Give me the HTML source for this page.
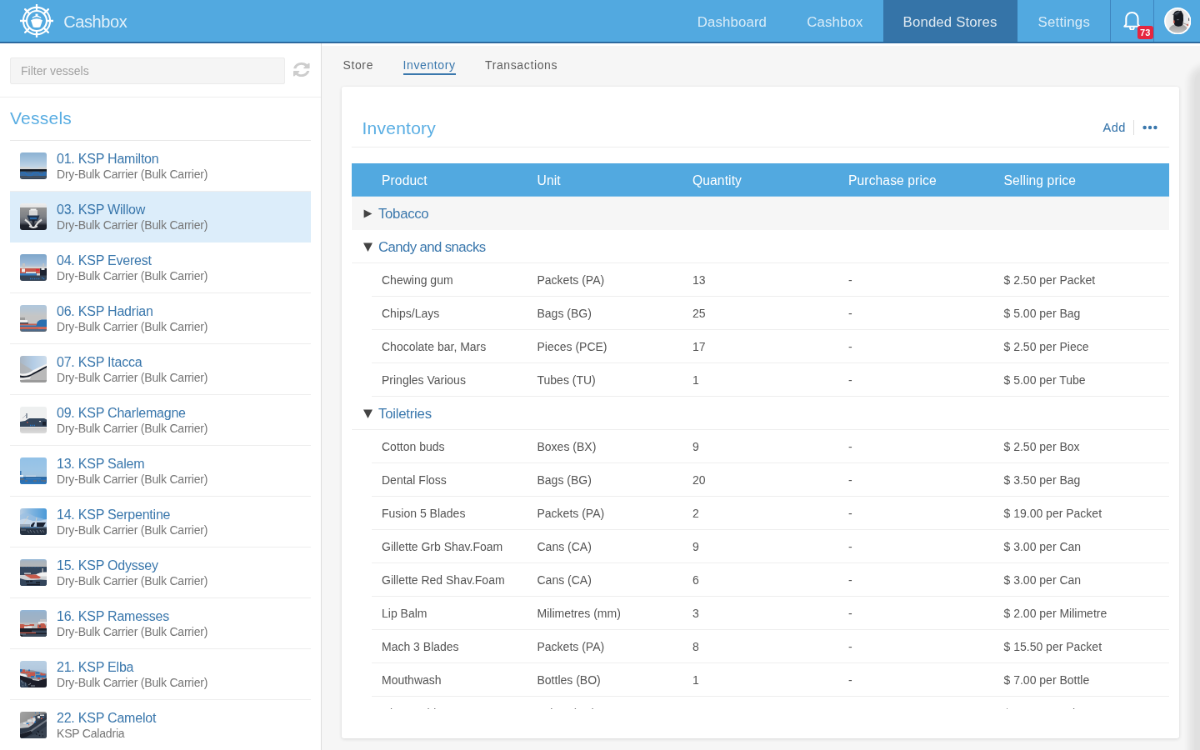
<!DOCTYPE html>
<html lang="en">
<head>
<meta charset="utf-8">
<title>Cashbox - Bonded Stores</title>
<style>
*{box-sizing:border-box;margin:0;padding:0}
html,body{width:1200px;height:750px;overflow:hidden;background:#f6f6f6}
body{font-family:"Liberation Sans",Arial,sans-serif;color:#555;font-size:14px}
a{text-decoration:none;color:inherit}
#app{position:absolute;left:0;top:0;width:1440px;height:900px;transform:scale(.833333);transform-origin:0 0;background:transparent;overflow:hidden;will-change:transform}

/* ---------- top bar ---------- */
#top{position:absolute;left:0;top:0;width:1440px;height:52px;background:#52a9e0;border-bottom:2px solid #2c699f}
#wline{position:absolute;left:386px;top:52px;width:1054px;height:2.7px;background:#fff}
#logo{position:absolute;left:24px;top:5px;width:40px;height:40px}
#brand{position:absolute;left:76.3px;top:13.6px;font-size:20px;line-height:24px;letter-spacing:-.42px;color:rgba(255,255,255,.84)}
#nav{position:absolute;left:812.4px;top:0;height:50px;display:flex}
#nav a{display:block;height:50px;line-height:53.6px;padding:0;text-align:center;font-size:16.8px;letter-spacing:.15px;color:rgba(255,255,255,.78);white-space:nowrap}
#nav a.on{background:#3574a8;color:rgba(255,255,255,.84)}
#bellbox{position:absolute;left:1332.2px;top:0;width:53px;height:50px;border-left:1px solid #3f86c0;border-right:1px solid #3f86c0}
#bell{position:absolute;left:14.1px;top:12.2px;width:22px;height:24px}
#badge{position:absolute;left:31.500px;top:31.200px;width:19px;height:15.600px;background:#e5263f;border-radius:3px;color:#fff;font-size:11px;font-weight:bold;line-height:16px;text-align:center}
#avatar{position:absolute;left:1396.8px;top:8.800px;width:32.400px;height:32.400px}
#avatar svg{display:block}

/* ---------- sidebar ---------- */
#side{position:absolute;left:0;top:52px;width:386px;height:848px;background:#fff;border-right:1px solid #dedede}
#filter{position:absolute;left:12px;top:17px;width:330px;height:32px;background:#f5f5f5;border:1px solid #ececec;border-radius:2px;padding-left:12px;font-size:14px;line-height:31px;color:#a2a2a2}
#refresh{position:absolute;left:352.4px;top:23.2px;width:19.6px;height:17.2px}
#side .hr1{position:absolute;left:0;top:64px;width:385px;height:1px;background:#eee}
#side h2{position:absolute;left:12px;top:76.3px;font-size:21px;line-height:28px;font-weight:normal;color:#5aaee3;letter-spacing:.24px}
#side .hr2{position:absolute;left:12px;top:116.2px;width:361px;height:1px;background:#e8e8e8}
#vessels{position:absolute;left:12px;top:117.4px;width:361px;list-style:none}
#vessels li{position:relative;height:61px;border-bottom:1px solid #eee}
#vessels li.sel{background:#dcedfa;border-bottom-color:#dcedfa}
#vessels .th{position:absolute;left:12px;top:13.3px;width:32px;height:32px;border-radius:3px;overflow:hidden}
#vessels .t{position:absolute;left:56px;top:11.2px;font-size:16px;line-height:20px;color:#3b78ad;white-space:nowrap;letter-spacing:-.22px}
#vessels .s{position:absolute;left:56px;top:30.6px;font-size:14px;line-height:18px;color:#777;white-space:nowrap;letter-spacing:-.2px}

/* ---------- main ---------- */
#tabs{position:absolute;left:411.5px;top:68px;font-size:14px;line-height:20px;color:#5e5e5e;white-space:nowrap}
#tabs a{position:absolute;top:0;letter-spacing:.62px}
#tabs a.on{color:#3b78ad;border-bottom:2px solid #3b78ad;padding-bottom:0}
#card{position:absolute;left:410px;top:104px;width:1005px;height:782px;background:#fff;border-radius:3px;box-shadow:0 1px 4px rgba(0,0,0,.13),0 0 1px rgba(0,0,0,.06);overflow:hidden}
#card h1{position:absolute;left:24.5px;top:35.6px;font-size:21px;line-height:28px;font-weight:normal;color:#5aaee3;letter-spacing:.24px}
#add{position:absolute;left:913.5px;top:39px;font-size:14.5px;line-height:20px;color:#3b78ad;letter-spacing:.5px;-webkit-text-stroke:.1px currentColor}
#vsep{position:absolute;left:950px;top:40px;width:1px;height:18px;background:#ddd}
#dots{position:absolute;left:960px;top:46px;width:20px;height:6px}
#card .hr{position:absolute;left:12px;top:72px;width:981px;height:1px;background:#eee}
#tbl{position:absolute;left:12px;top:92px;width:981px;height:654.9px;overflow:hidden}
.row{position:relative;height:40px;white-space:nowrap}
.row span{position:absolute;top:0;line-height:40px}
.hd{background:#52a9e0;color:#fff;font-size:15.6px;letter-spacing:.12px}
.hd span{line-height:41px}
.grp{font-size:16.8px;color:#3b78ad;border-bottom:1px solid #eee}
.grp.alt{background:#f6f6f6;border-bottom-color:#f6f6f6}
.grp i{position:absolute;left:14px;top:15px;width:11px;height:11px}
.grp i svg{display:block}
.grp span{left:32px;line-height:42.6px}
.it{color:#555;font-size:14px}
.it:after{content:"";position:absolute;left:24px;right:0;bottom:0;height:1px;background:#eee}
.c1{left:36px}.c2{left:222.5px}.c3{left:409px}.c4{left:596px}.c5{left:782.5px}
#sb{position:absolute;left:1433px;top:84px;width:40px;height:900px;border-radius:14px;background:rgba(0,0,0,.085);box-shadow:0 0 9px 6px rgba(0,0,0,.085)}
</style>
</head>
<body>
<div id="app">

<div id="top">
  <svg id="logo" viewBox="0 0 40 40"><g fill="none" stroke="#fff"><circle cx="20" cy="20" r="16.100" stroke-width="2.100"/><circle cx="20" cy="20" r="12" stroke-width="2.200"/><path d="M32.20 20.00L40.00 20.00M28.63 28.63L33.86 33.86M20.00 32.20L20.00 40.00M11.37 28.63L6.14 33.86M7.80 20.00L0.00 20.00M11.37 11.37L6.14 6.14M20.00 7.80L20.00 0.00M28.63 11.37L33.86 6.14" stroke-width="2.300" stroke-linecap="round"/></g><g fill="#fff"><path d="M13 19.300Q20 15.200 27 19.300L24.200 27.600Q20 28.600 15.800 27.600Z"/><path d="M14.800 17.200Q20 13.200 25.200 17.200L25.200 15.800Q20 11.800 14.800 15.800Z"/><path d="M18.500 11.600h3v2.800h-3z"/></g></svg>
  <div id="brand">Cashbox</div>
  <div id="nav">
    <a style="width:132px">Dashboard</a><a style="width:115.2px">Cashbox</a><a class="on" style="width:161px">Bonded Stores</a><a style="width:112.4px;letter-spacing:.25px">Settings</a>
  </div>
  <div id="bellbox">
    <svg id="bell" viewBox="0 0 22 24"><g fill="none" stroke="#fff" stroke-width="2.050" stroke-linejoin="round" stroke-linecap="round"><path d="M2.300 19.750L4.300 17.300V9.900A7.100 7 0 0 1 18.500 9.900V17.300L20.500 19.750Z"/><path d="M9.100 21.300A2.300 2.300 0 0 0 13.700 21.300"/></g></svg>
    <div id="badge">73</div>
  </div>
  <div id="avatar"><svg viewBox="0 0 32 32" width="32.400" height="32.400"><defs><linearGradient id="av" x1="0" y1="0" x2="1" y2="0"><stop offset="0" stop-color="#f2f2f2"/><stop offset=".5" stop-color="#e2e2e2"/><stop offset="1" stop-color="#ececec"/></linearGradient><linearGradient id="av2" x1="0" y1="0" x2="0" y2="1"><stop offset="0" stop-color="#9e9e9e"/><stop offset=".5" stop-color="#b4b4b4"/><stop offset="1" stop-color="#d6d6d6"/></linearGradient><clipPath id="avc"><circle cx="16" cy="16" r="14.200"/></clipPath></defs><circle cx="16" cy="16" r="16" fill="#fff"/><g clip-path="url(#avc)"><rect width="32" height="32" fill="url(#av)"/><ellipse cx="16.700" cy="26.300" rx="10.900" ry="6.800" fill="url(#av2)"/><path d="M11.200 8.500Q11.500 4 16 3.600Q21.500 3.500 22.600 9Q23.200 15 22 20.500Q20 22.600 16.500 22.400Q13 22.400 12 20Q10.600 14 11.200 8.500Z" fill="#171a21"/><path d="M9.500 8.200l4.500-1.500 5-3 2 .8-6 5.200z" fill="#2a303a"/><path d="M13 7.500l5-2.500M15 14.500h2.500" stroke="#7e8792" stroke-width=".8"/><path d="M10.800 15.500l1.400-.5.500 3-1.700.8z" fill="#d8604e"/><path d="M26.200 20l1.800-.8 1 1.800-1.600.9z" fill="#d8604e"/><rect x="24.200" y="10" width="1.500" height="6.500" fill="#dfeaf4"/><rect x="28.800" y="12.500" width="1.100" height="3.200" fill="#3a3f48"/><path d="M22.500 18.500l5 2" stroke="#8c8c8c" stroke-width=".8"/></g></svg></div>
</div>

<div id="wline"></div>

<div id="side">
  <div id="filter">Filter vessels</div>
  <svg id="refresh" viewBox="0 0 1536 1536" preserveAspectRatio="none"><path fill="#cdcdcd" d="M1511 928q0 5-1 7-64 268-268 434.500t-478 166.500q-146 0-282.500-55t-243.500-157l-129 129q-19 19-45 19t-45-19-19-45v-448q0-26 19-45t45-19h448q26 0 45 19t19 45-19 45l-137 137q71 66 161 102t187 36q134 0 250-65t186-179q11-17 53-117 8-23 30-23h192q13 0 22.500 9.500t9.500 22.500zM1536 128v448q0 26-19 45t-45 19h-448q-26 0-45-19t-19-45 19-45l138-138q-148-137-349-137-134 0-250 65t-186 179q-11 17-53 117-8 23-30 23h-199q-13 0-22.500-9.500t-9.500-22.500v-7q65-268 270-434.500t480-166.500q146 0 284 55.500t245 156.500l130-129q19-19 45-19t45 19 19 45z"/></svg>
  <div class="hr1"></div>
  <h2>Vessels</h2>
  <div class="hr2"></div>
  <ul id="vessels">
    <li><div class="th"><svg viewBox="0 0 32 32" width="32" height="32"><defs><linearGradient id="g1" x1="0" y1="0" x2="0" y2="1"><stop offset="0" stop-color="#8cb2d3"/><stop offset="0.3" stop-color="#a6c4de"/><stop offset="0.55" stop-color="#c2d6e7"/><stop offset="0.6" stop-color="#d3d8dc"/></linearGradient></defs><rect width="32" height="32" fill="url(#g1)"/><rect y="20" width="32" height="12" fill="#364658"/><rect y="20" width="32" height="2.2" fill="#151b24"/><rect y="23.5" width="32" height="4.5" fill="#3a6a9e"/><path d="M1 24h5l3 3.5h5l2-3.5h6l2 3h5v-3h2" stroke="#2a70b8" stroke-width="1.6" fill="none"/><rect y="28.5" width="32" height="2" fill="#4a5868"/><rect x="0" y="17" width="12" height="2.5" fill="#d5d5d2" opacity=".8"/><rect x="22" y="17.5" width="10" height="2" fill="#d5d5d2" opacity=".8"/></svg></div><div class="t">01. KSP Hamilton</div><div class="s">Dry-Bulk Carrier (Bulk Carrier)</div></li>
    <li class="sel"><div class="th"><svg viewBox="0 0 32 32" width="32" height="32"><defs><linearGradient id="g2" x1="0" y1="0" x2="0" y2="1"><stop offset="0" stop-color="#eeeeee"/><stop offset="0.15" stop-color="#e4e4e4"/><stop offset="0.17" stop-color="#949494"/><stop offset="0.5" stop-color="#7e8186"/><stop offset="0.72" stop-color="#5a5e68"/><stop offset="0.82" stop-color="#20232d"/><stop offset="1" stop-color="#1c1f29"/></linearGradient></defs><rect width="32" height="32" fill="url(#g2)"/><path d="M11 8h10v7h-10z" fill="#d8d8d8"/><path d="M12.5 6.5h7v2h-7z" fill="#f2f2f2"/><path d="M8.5 14.5h15l-2.5 6.5h-10z" fill="#24364e"/><path d="M12 18h8" stroke="#2a78c4" stroke-width="1.3"/><path d="M6 19.500q5 3 8 8.500M26 19.500q-5 3-8 8.500" stroke="#dcdcdc" stroke-width="2.200" fill="none"/><path d="M11 27.500q5 3 10 0" stroke="#e4e4e4" stroke-width="1.800" fill="none"/><path d="M14 20l2 7 2-7z" fill="#1c2230"/></svg></div><div class="t">03. KSP Willow</div><div class="s">Dry-Bulk Carrier (Bulk Carrier)</div></li>
    <li><div class="th"><svg viewBox="0 0 32 32" width="32" height="32"><defs><linearGradient id="g3" x1="0" y1="0" x2="0" y2="1"><stop offset="0" stop-color="#7da6cb"/><stop offset="0.35" stop-color="#9cbad8"/><stop offset="0.45" stop-color="#b4c4d4"/><stop offset="0.5" stop-color="#d0d0d0"/></linearGradient></defs><rect width="32" height="32" fill="url(#g3)"/><rect y="15" width="32" height="4" fill="#d4d4d4"/><rect x="3" y="11" width="3" height="5" fill="#c4c4c4"/><rect x="27.500" y="11" width="1.500" height="5" fill="#c8c8c8"/><rect y="17" width="24" height="6" fill="#c4594a"/><rect x="2" y="17.500" width="4" height="4" fill="#eee"/><rect x="7" y="21" width="12" height="2.500" fill="#d8d8d8"/><rect x="19" y="18" width="4" height="1.800" fill="#e8243c"/><rect x="24" y="17" width="8" height="9" fill="#1c2230"/><rect x="25.500" y="16.500" width="4" height="2.500" fill="#e6e6e6"/><rect y="23" width="20" height="3" fill="#3a7cbc"/><rect y="25.500" width="32" height="6.500" fill="#364456"/><path d="M12 29.500h12M26 28.500h1.500M28 29.500h2" stroke="#2a78c4" stroke-width="1.300" stroke-dasharray="1.300 1.200"/></svg></div><div class="t">04. KSP Everest</div><div class="s">Dry-Bulk Carrier (Bulk Carrier)</div></li>
    <li><div class="th"><svg viewBox="0 0 32 32" width="32" height="32"><defs><linearGradient id="g4" x1="0" y1="0" x2="0" y2="1"><stop offset="0" stop-color="#b0c8de"/><stop offset="0.25" stop-color="#bcc6d0"/><stop offset="0.4" stop-color="#c6c6c6"/><stop offset="1" stop-color="#c4c4c4"/></linearGradient></defs><rect width="32" height="32" fill="url(#g4)"/><rect y="18" width="9" height="3.500" fill="#f0f0f0"/><rect y="15" width="6" height="3" fill="#8a8a8a" opacity=".7"/><rect y="21" width="10" height="2.500" fill="#3c4656"/><path d="M21 20q2-2.500 5-2.500h6v8h-13z" fill="#2a6fb0"/><rect y="22.500" width="20" height="2" fill="#c46050"/><rect y="24.500" width="32" height="1.800" fill="#2a6fb0"/><rect y="26.200" width="32" height="2.800" fill="#c86252"/><rect x="22" y="27.500" width="10" height="1.800" fill="#d86a5c"/><rect y="29" width="32" height="3" fill="#5a6878"/><path d="M3 30h26" stroke="#2a70b8" stroke-width="1.200" stroke-dasharray="1.500 1.200"/></svg></div><div class="t">06. KSP Hadrian</div><div class="s">Dry-Bulk Carrier (Bulk Carrier)</div></li>
    <li><div class="th"><svg viewBox="0 0 32 32" width="32" height="32"><defs><linearGradient id="g5" x1="0" y1="0" x2="1" y2="0"><stop offset="0" stop-color="#a9b6c4"/><stop offset=".5" stop-color="#b4cde6"/><stop offset="1" stop-color="#cfdeec"/></linearGradient></defs><rect width="32" height="32" fill="url(#g5)"/><path d="M0 8l10 6 6 4-16 6z" fill="#b2b2b2" opacity=".75"/><path d="M0 22.500q8 2 16-3.500l16-8.500v21.500h-32z" fill="#b9b9b9"/><path d="M0 21q8 2 16-4l16-7.500v2.500l-16 8q-8 5-16 3.500z" fill="#f4f4f4"/><path d="M0 23.500q8 2.500 16-3l16-8.500v2l-16 8.500q-8 5-16 3z" fill="#141a26"/><path d="M0 27q8 0 13-2l-1 2.500-12 1.500z" fill="#f4f4f4"/><rect y="29" width="32" height="3" fill="#9a9a9a"/></svg></div><div class="t">07. KSP Itacca</div><div class="s">Dry-Bulk Carrier (Bulk Carrier)</div></li>
    <li><div class="th"><svg viewBox="0 0 32 32" width="32" height="32"><defs><linearGradient id="g6" x1="0" y1="0" x2="0" y2="1"><stop offset="0" stop-color="#eef0f0"/><stop offset="0.45" stop-color="#f0f0f0"/><stop offset="0.75" stop-color="#dedede"/><stop offset="0.8" stop-color="#cacaca"/><stop offset="1" stop-color="#dcdcdc"/></linearGradient></defs><rect width="32" height="32" fill="url(#g6)"/><path d="M0 18l6-1 5-3h18l3 1.500v8.500h-32z" fill="#34465c"/><rect x="7" y="8" width="2" height="6" fill="#8e98a4"/><path d="M3 14l4-4" stroke="#a8aeb6" stroke-width=".8"/><rect x="8" y="18" width="1.500" height="1.500" fill="#d65a48"/><rect x="23" y="17" width="2" height="1.200" fill="#e8e8e8"/><path d="M12 22.500h6" stroke="#2a78c4" stroke-width="1.300" stroke-dasharray="1.300 1.100"/><rect x="27" y="18" width="4" height="4.500" fill="#1a2230"/><rect y="24" width="32" height="1" fill="#e8e8e8"/></svg></div><div class="t">09. KSP Charlemagne</div><div class="s">Dry-Bulk Carrier (Bulk Carrier)</div></li>
    <li><div class="th"><svg viewBox="0 0 32 32" width="32" height="32"><defs><linearGradient id="g7" x1="0" y1="0" x2="0" y2="1"><stop offset="0" stop-color="#93c2e8"/><stop offset="0.5" stop-color="#9ec6e6"/><stop offset="0.7" stop-color="#a4c4de"/></linearGradient></defs><rect width="32" height="32" fill="url(#g7)"/><rect y="16" width="1.500" height="6" fill="#3e7ab4"/><rect y="21" width="4" height="3.500" fill="#eef2f6"/><rect x="7" y="21.500" width="12" height="2" fill="#c6d6e6"/><rect y="23.500" width="32" height="8.500" fill="#2b70b3"/><rect x="4" y="23.500" width="28" height="1.400" fill="#1f5a96"/><path d="M0 26h5M6 28h3M16 28h4M22 28h1M25 27.500h1.200M27 28h4" stroke="#6a6f78" stroke-width="1.600"/><path d="M7 25.500h18" stroke="#4c8ac6" stroke-width=".8"/><rect y="30" width="32" height="2" fill="#2f78bc"/></svg></div><div class="t">13. KSP Salem</div><div class="s">Dry-Bulk Carrier (Bulk Carrier)</div></li>
    <li><div class="th"><svg viewBox="0 0 32 32" width="32" height="32"><defs><linearGradient id="g8" x1="0" y1="0" x2="1" y2="0"><stop offset="0" stop-color="#b9cfe4"/><stop offset=".45" stop-color="#7fb4e0"/><stop offset="1" stop-color="#4b9ad8"/></linearGradient></defs><rect width="32" height="32" fill="url(#g8)"/><path d="M0 8q6-4 12-1t10 4 10 3v6h-32z" fill="#9cc0e2" opacity=".7"/><path d="M0 14q5-3 12 0t20-1v9h-32z" fill="#cfdcea" opacity=".8"/><path d="M4 19l6-10M19 16l1-5" stroke="#d8d2c8" stroke-width=".9"/><path d="M20 17h11l-3 5h-8z" fill="#1c2434"/><path d="M13 20l3-3h2l-2 5h-3z" fill="#1c2434"/><rect y="19" width="12" height="4" fill="#8e9cac" opacity=".8"/><rect y="22" width="32" height="2" fill="#5a6c80"/><path d="M3 23h20" stroke="#2a7cc8" stroke-width="1.200" stroke-dasharray="2 1.200"/><rect y="24" width="32" height="8" fill="#263242"/><path d="M1 26h6M9 26.500l2 3M12 26l2 3M16 26.500l2 3M20 26l2 3.500M24 26l2 3M27 26l2 3" stroke="#6c7684" stroke-width="1"/></svg></div><div class="t">14. KSP Serpentine</div><div class="s">Dry-Bulk Carrier (Bulk Carrier)</div></li>
    <li><div class="th"><svg viewBox="0 0 32 32" width="32" height="32"><defs><linearGradient id="g9" x1="0" y1="0" x2="0" y2="1"><stop offset="0" stop-color="#94bce0"/><stop offset="0.06" stop-color="#a8b4c0"/><stop offset="0.28" stop-color="#b6b6b6"/><stop offset="0.3" stop-color="#34465c"/></linearGradient></defs><rect width="32" height="32" fill="url(#g9)"/><path d="M3 10h26" stroke="#2a78c4" stroke-width="1.300" stroke-dasharray="1.300 2.300"/><rect y="9.500" width="32" height="10" fill="#34465c" opacity=".92"/><rect x="26.500" y="11" width="1.200" height="7" fill="#d8d8d8"/><path d="M0 19h12l8-1 6-2h6v9h-32z" fill="#cfd1d3"/><path d="M19 19q4-4 13-3.500v5h-13z" fill="#f0f0f0"/><path d="M5 18.500h14l6 3-2 1.800h-10z" fill="#c65a4b"/><rect x="5" y="16.500" width="8" height="1.300" fill="#d8d8d8"/><path d="M0 23q8 3 16 2t16 0v7h-32z" fill="#33455b"/><path d="M7 27h4M12 26.500h3M19 28h5M8 30.500h16" stroke="#161b25" stroke-width="1.300"/></svg></div><div class="t">15. KSP Odyssey</div><div class="s">Dry-Bulk Carrier (Bulk Carrier)</div></li>
    <li><div class="th"><svg viewBox="0 0 32 32" width="32" height="32"><defs><linearGradient id="g10" x1="0" y1="0" x2="0" y2="1"><stop offset="0" stop-color="#93b7d9"/><stop offset="0.1" stop-color="#9ab2ca"/><stop offset="0.45" stop-color="#a3b3c3"/><stop offset="0.5" stop-color="#c0c0c0"/></linearGradient></defs><rect width="32" height="32" fill="url(#g10)"/><rect x="22" y="14" width="10" height="2.500" fill="#e8e8e8"/><rect x="24" y="11" width="7" height="3" fill="#bfc3c7"/><rect y="17" width="32" height="5.500" fill="#bdbdbd"/><path d="M0 17h4l2 1h5l1-1h5v2h-8v3h-9z" fill="#c25a4a"/><rect x="5" y="19.500" width="9" height="2.500" fill="#e4e4e4"/><path d="M21 17.500h3l1-1.500h4l2 3v4h-10z" fill="#c25a4a"/><rect x="23" y="18.500" width="1.800" height="1.800" fill="#3c4e64"/><rect y="22" width="32" height="10" fill="#1b1f29"/><rect x="14" y="24.500" width="18" height="3" fill="#37475b"/><rect y="26.800" width="19" height="1.300" fill="#c86050"/><rect x="3" y="29" width="29" height="3" fill="#3a4859"/><rect y="28.300" width="7" height="1.500" fill="#5a6878"/></svg></div><div class="t">16. KSP Ramesses</div><div class="s">Dry-Bulk Carrier (Bulk Carrier)</div></li>
    <li><div class="th"><svg viewBox="0 0 32 32" width="32" height="32"><defs><linearGradient id="g11" x1="0" y1="0" x2="0" y2="1"><stop offset="0" stop-color="#b9d0e4"/><stop offset="0.3" stop-color="#b4cadf"/><stop offset="0.4" stop-color="#a9c0d8"/></linearGradient></defs><rect width="32" height="32" fill="url(#g11)"/><path d="M0 10l16 1.500 16 4v10h-32z" fill="#8c949e"/><path d="M0 10h2.500v3h-2.500zM10 10.500h2v2h-2zM18.500 13.500h5v2h-5zM19 17h6v3h-6zM13 18l2-2 2 2v2h-4zM24 16.500h7v3.500h-7z" fill="#2b72b6"/><path d="M3 10.500h3v2.500h-3zM1 13h6v2h-6zM7 12.500h5v3h-5zM12 13.500h6v4.500h-6zM9 16h4v3h-4zM24.500 14l3 1.500 3 0v2h-6zM21 20h3v2h-3zM26 20.500h2.500v2h-2.500z" fill="#c4574a"/><path d="M0 15l7 1.500 2 3-9-1.500z" fill="#eef0f2"/><path d="M0 17.500l10 3 12 3.500 10-3v11h-32z" fill="#1c1e29"/><path d="M15 22.500l8 1" stroke="#d8d8d8" stroke-width="1"/><path d="M0 22l8 5 2 5h-10z" fill="#33445a"/><path d="M2 23.500v2M3 26.500h1M6 27h1M3 30h1M6 29h1M10 29l3-2M13 30h5" stroke="#8a94a0" stroke-width="1"/></svg></div><div class="t">21. KSP Elba</div><div class="s">Dry-Bulk Carrier (Bulk Carrier)</div></li>
    <li><div class="th"><svg viewBox="0 0 32 32" width="32" height="32"><defs><linearGradient id="g12" x1="0" y1="0" x2="1" y2="1"><stop offset="0" stop-color="#a4a4a4"/><stop offset=".45" stop-color="#8c8c8c"/></linearGradient></defs><rect width="32" height="32" fill="url(#g12)"/><path d="M0 15l9-4 7-5 8-3 8-1v30h-32z" fill="#3a4452"/><path d="M0 14l8-3 6-4 4-1 1 4-3 5-8 3-8 2z" fill="#b9bcbf"/><path d="M9 9.500h5v2.500h-5zM15 8h3v5h-3zM21 5h3v3h-3zM24 3.500h5v1.500h-5zM4 13h4v2h-4z" fill="#dcdcdc"/><path d="M0 17l9-2 7 0-3 4-13 4z" fill="#c2c4c6"/><path d="M7.500 13.500h3v1.500h-3zM17.500 11.500h1.500v3h-1.500zM16.500 5.500h1.400v1.200h-1.400zM27.500 6h1.500v2.200h-1.500zM18 1h1v1h-1zM23 1h1v1h-1z" fill="#2a78c4"/><path d="M25 7.500h3.500v4h-3.500zM18 15h1.500v2.200h-1.500zM13.500 6.500h1.200v1.500h-1.200zM10 15h1.200v1.200h-1.200zM14.500 13h1.200v1h-1.200z" fill="#d4604e"/><path d="M0 32v-12l10-1 9-6 13-8v12l-14 10-14 5z" fill="#2e3846"/><path d="M32 9l-19 13-13 5v2l13-4.500 19-13z" fill="#7c848e" opacity=".85"/><path d="M0 27l13-4 2 3-7 4-8 2z" fill="#1b1f29"/><path d="M21 23l2 2M23 28l1 1M26 24l1 1M27 29h1M19 26.500l1.500 1" stroke="#151922" stroke-width="1.400"/></svg></div><div class="t">22. KSP Camelot</div><div class="s">KSP Caladria</div></li>
  </ul>
</div>

<div id="tabs">
  <a style="left:0">Store</a><a class="on" style="left:72px">Inventory</a><a style="left:170.5px">Transactions</a>
</div>

<div id="card">
  <h1>Inventory</h1>
  <a id="add">Add</a>
  <div id="vsep"></div>
  <svg id="dots" viewBox="0 0 20 6"><circle cx="3.6" cy="3" r="2.2" fill="#3b78ad"/><circle cx="10" cy="3" r="2.2" fill="#3b78ad"/><circle cx="16.4" cy="3" r="2.2" fill="#3b78ad"/></svg>
  <div class="hr"></div>
  <div id="tbl">
    <div class="row hd"><span class="c1">Product</span><span class="c2">Unit</span><span class="c3">Quantity</span><span class="c4">Purchase price</span><span class="c5">Selling price</span></div>
    <div class="row grp alt"><i><svg viewBox="0 0 9 9" width="11" height="11"><path d="M0.5 0.5L8.5 4.5L0.5 8.5Z" fill="#444"/></svg></i><span style="letter-spacing:-.3px">Tobacco</span></div>
    <div class="row grp"><i><svg viewBox="0 0 9 9" width="11" height="11"><path d="M0 0.5L9 0.5L4.5 9Z" fill="#444"/></svg></i><span style="letter-spacing:-.6px">Candy and snacks</span></div>
    <div class="row it"><span class="c1">Chewing gum</span><span class="c2">Packets (PA)</span><span class="c3">13</span><span class="c4">-</span><span class="c5">$ 2.50 per Packet</span></div>
    <div class="row it"><span class="c1">Chips/Lays</span><span class="c2">Bags (BG)</span><span class="c3">25</span><span class="c4">-</span><span class="c5">$ 5.00 per Bag</span></div>
    <div class="row it"><span class="c1">Chocolate bar, Mars</span><span class="c2">Pieces (PCE)</span><span class="c3">17</span><span class="c4">-</span><span class="c5">$ 2.50 per Piece</span></div>
    <div class="row it"><span class="c1">Pringles Various</span><span class="c2">Tubes (TU)</span><span class="c3">1</span><span class="c4">-</span><span class="c5">$ 5.00 per Tube</span></div>
    <div class="row grp"><i><svg viewBox="0 0 9 9" width="11" height="11"><path d="M0 0.5L9 0.5L4.5 9Z" fill="#444"/></svg></i><span style="letter-spacing:-.24px">Toiletries</span></div>
    <div class="row it"><span class="c1">Cotton buds</span><span class="c2">Boxes (BX)</span><span class="c3">9</span><span class="c4">-</span><span class="c5">$ 2.50 per Box</span></div>
    <div class="row it"><span class="c1">Dental Floss</span><span class="c2">Bags (BG)</span><span class="c3">20</span><span class="c4">-</span><span class="c5">$ 3.50 per Bag</span></div>
    <div class="row it"><span class="c1">Fusion 5 Blades</span><span class="c2">Packets (PA)</span><span class="c3">2</span><span class="c4">-</span><span class="c5">$ 19.00 per Packet</span></div>
    <div class="row it"><span class="c1">Gillette Grb Shav.Foam</span><span class="c2">Cans (CA)</span><span class="c3">9</span><span class="c4">-</span><span class="c5">$ 3.00 per Can</span></div>
    <div class="row it"><span class="c1">Gillette Red Shav.Foam</span><span class="c2">Cans (CA)</span><span class="c3">6</span><span class="c4">-</span><span class="c5">$ 3.00 per Can</span></div>
    <div class="row it"><span class="c1">Lip Balm</span><span class="c2">Milimetres (mm)</span><span class="c3">3</span><span class="c4">-</span><span class="c5">$ 2.00 per Milimetre</span></div>
    <div class="row it"><span class="c1">Mach 3 Blades</span><span class="c2">Packets (PA)</span><span class="c3">8</span><span class="c4">-</span><span class="c5">$ 15.50 per Packet</span></div>
    <div class="row it"><span class="c1">Mouthwash</span><span class="c2">Bottles (BO)</span><span class="c3">1</span><span class="c4">-</span><span class="c5">$ 7.00 per Bottle</span></div>
    <div class="row it"><span class="c1">Nivea cold cream</span><span class="c2">Tubes (TU)</span><span class="c3">4</span><span class="c4">-</span><span class="c5">$ 4.00 per Tube</span></div>
  </div>
</div>

<div id="sb"></div>
</div>
</body>
</html>
